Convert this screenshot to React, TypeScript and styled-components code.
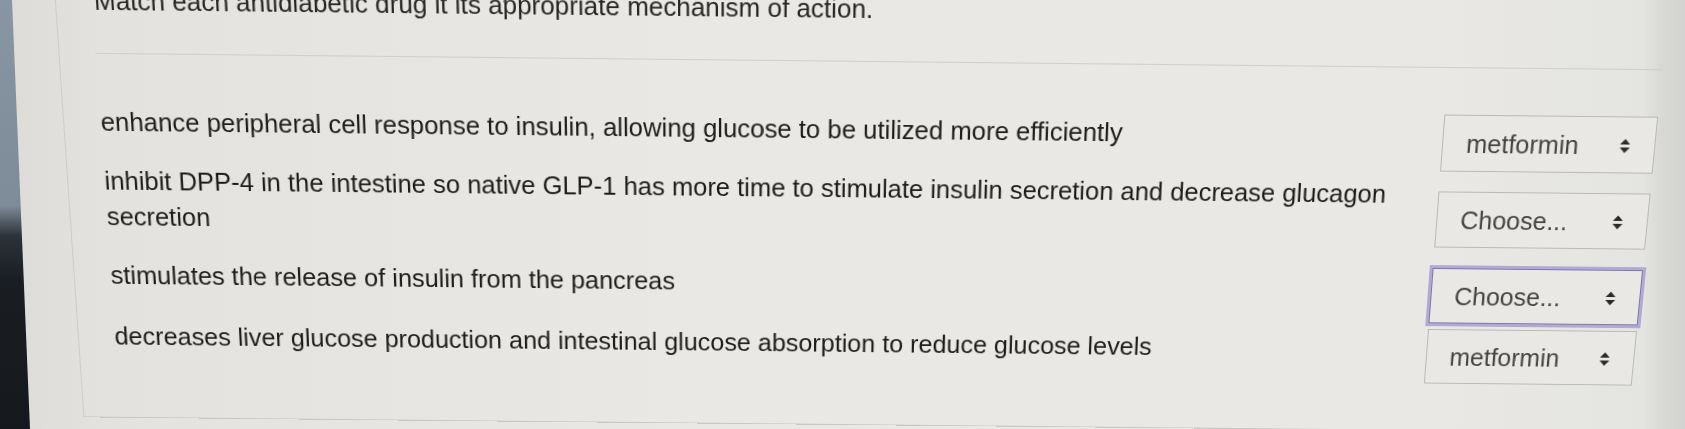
import styled, { createGlobalStyle } from "styled-components";

const GlobalStyle = createGlobalStyle`
  body {
    margin: 0;
    background: #1b2025;
    font-family: "Liberation Sans", Arial, sans-serif;
  }
`;

// monitor edge on the left: blue-grey at the top, dark below
const Frame = styled.div`
  width: 1685px;
  height: 429px;
  display: flex;
  overflow: hidden;
  background: linear-gradient(
    180deg,
    #8896a4 0%,
    #7e8b98 48%,
    #2c333a 55%,
    #1a1e23 65%,
    #15191d 100%
  );
`;

const Screen = styled.div`
  flex: 1;
  overflow: hidden;
  clip-path: polygon(12px 0, 100% 0, 100% 100%, 30px 100%);
  background: linear-gradient(
    90deg,
    #dcdbd7 0%,
    #e3e2de 6%,
    #e9e8e4 40%,
    #e9e8e5 86%,
    #e4e4e1 97.5%,
    #d8d8d5 98.6%,
    #d3d3d1 100%
  );
`;

// the page is seen at a slight angle
const Sheet = styled.div`
  transform: perspective(2000px) rotateX(-12deg) rotate(0.6deg);
  transform-origin: 818px 250px;
`;

const Card = styled.div`
  margin-left: 72px;
  width: 1574px;
  height: 432px;
  box-sizing: border-box;
  border-left: 1px solid #cdccc8;
  border-bottom: 1px solid #c9c8c4;
  padding: 0 1px 0 36px;
  display: flex;
  flex-direction: column;
`;

const Prompt = styled.div`
  margin: -9px 0 0 1px;
  font-size: 25.4px;
  line-height: 36px;
  color: #262626;
  white-space: nowrap;
`;

const Divider = styled.div`
  margin: 33px 0 0 -1px;
  height: 1px;
  background: #cfcecb;
`;

const Rows = styled.div`
  margin-top: 46px;
  display: flex;
  flex-direction: column;
`;

const Row = styled.div<{ $space: number }>`
  display: flex;
  align-items: flex-start;
  justify-content: space-between;
  min-height: 57px;
  margin-top: ${(p) => p.$space}px;
`;

const Mechanism = styled.div`
  max-width: 1300px;
  margin-top: 3px;
  font-size: 25.4px;
  line-height: 36px;
  color: #1c1c1c;
`;

const SelectWrap = styled.div`
  position: relative;
  align-self: flex-end;
  width: 211px;
  height: 57px;
  flex-shrink: 0;
`;

const DrugSelect = styled.select<{ $focused?: boolean }>`
  appearance: none;
  width: 100%;
  height: 100%;
  box-sizing: border-box;
  padding: 0 44px 0 23px;
  border: 1px solid ${(p) => (p.$focused ? "#7f78a6" : "#bab9b6")};
  box-shadow: ${(p) => (p.$focused ? "0 0 0 3px #b1a9d6" : "none")};
  border-radius: 0;
  background: #e9e8e4;
  font-family: "Liberation Sans", Arial, sans-serif;
  font-size: 25px;
  color: #444444;
  outline: none;
`;

const Arrows = styled.svg`
  position: absolute;
  right: 24px;
  top: 50%;
  width: 12px;
  height: 15px;
  margin-top: -7px;
  pointer-events: none;
`;

const DRUGS = ["Choose...", "metformin", "sitagliptin", "glipizide", "pioglitazone"];

type Item = {
  text: string;
  value: string;
  focused?: boolean;
  space: number;
};

const ITEMS: Item[] = [
  {
    text: "enhance peripheral cell response to insulin, allowing glucose to be utilized more efficiently",
    value: "metformin",
    space: 0,
  },
  {
    text: "inhibit DPP-4 in the intestine so native GLP-1 has more time to stimulate insulin secretion and decrease glucagon secretion",
    value: "Choose...",
    space: 2,
  },
  {
    text: "stimulates the release of insulin from the pancreas",
    value: "Choose...",
    focused: true,
    space: 21,
  },
  {
    text: "decreases liver glucose production and intestinal glucose absorption to reduce glucose levels",
    value: "metformin",
    space: 6,
  },
];

function App() {
  return (
    <Frame>
      <GlobalStyle />
      <Screen>
        <Sheet>
          <Card>
            <Prompt>Match each antidiabetic drug it its appropriate mechanism of action.</Prompt>
            <Divider />
            <Rows>
              {ITEMS.map((item) => (
                <Row key={item.text} $space={item.space}>
                  <Mechanism>{item.text}</Mechanism>
                  <SelectWrap>
                    <DrugSelect defaultValue={item.value} $focused={item.focused}>
                      {DRUGS.map((d) => (
                        <option key={d} value={d}>
                          {d}
                        </option>
                      ))}
                    </DrugSelect>
                    <Arrows viewBox="0 0 12 15">
                      <path d="M6 0.5 L11 6 L1 6 Z" fill="#2b2b2b" />
                      <path d="M6 14.5 L11 9 L1 9 Z" fill="#2b2b2b" />
                    </Arrows>
                  </SelectWrap>
                </Row>
              ))}
            </Rows>
          </Card>
        </Sheet>
      </Screen>
    </Frame>
  );
}

export default App;
